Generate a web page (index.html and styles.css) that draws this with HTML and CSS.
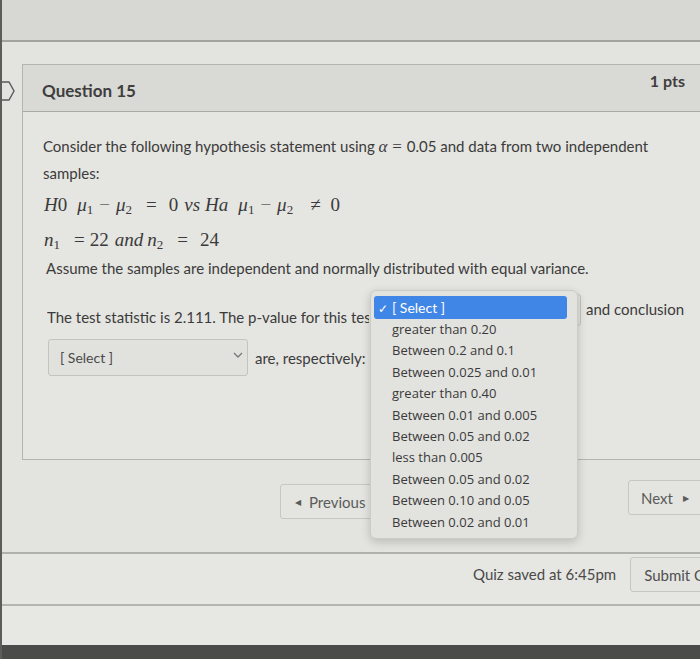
FILE: index.html
```html
<!DOCTYPE html>
<html>
<head>
<meta charset="utf-8">
<link rel="stylesheet" href="styles.css">
</head>
<body>
<div class="screen">
  <div class="topbar"></div>
  <div class="qrow">
    <div class="flagcol">
      <svg class="flag" width="14" height="22" viewBox="0 0 14 22"><path d="M-4 2 H7 L12 11 L7 20 H-4" fill="none" stroke="#5a5a58" stroke-width="1.4"/></svg>
    </div>
    <div class="question">
      <div class="qhead">
        <span class="qtitle">Question 15</span>
        <span class="pts">1 pts</span>
      </div>
      <div class="qbody">
        <p class="intro">Consider the following hypothesis statement using <span class="mi">α</span> <span class="mo">=</span> 0.05 and data from two independent samples:</p>
        <p class="math m1"><span class="t it">H</span><span class="t">0</span><span class="t it g10">μ</span><sub>1</sub><span class="t minus g6">−</span><span class="t it g6">μ</span><sub>2</sub><span class="t g14">=</span><span class="t g12">0</span><span class="t it g6">vs</span><span class="t it g5">Ha</span><span class="t it g10">μ</span><sub>1</sub><span class="t minus g6">−</span><span class="t it g6">μ</span><sub>2</sub><span class="t g16">≠</span><span class="t g10">0</span></p>
        <p class="math m2"><span class="t it">n</span><sub>1</sub><span class="t g14">=</span><span class="t g5">22</span><span class="t it g6">and</span><span class="t it g4">n</span><sub>2</sub><span class="t g14">=</span><span class="t g12">24</span></p>
        <p class="assume">Assume the samples are independent and normally distributed with equal variance.</p>
        <div class="qline ql1">
          <span class="lead">The test statistic is 2.111. The p-value for this test</span>
          <span class="sel sel2"><span class="caret">&#8250;</span></span>
          <span class="after">and conclusion</span>
        </div>
        <div class="qline ql2">
          <span class="sel sel1"><span class="seltext">[ Select ]</span><svg class="chev" width="10" height="6" viewBox="0 0 10 6"><path d="M1 1 L5 5 L9 1" fill="none" stroke="#777" stroke-width="1.3"/></svg></span>
          <span class="after2">are, respectively:</span>
        </div>
      </div>
    </div>
  </div>
  <div class="nav">
    <span class="btn prev"><span class="tri">&#9664;</span>Previous</span>
    <span class="btn next">Next<span class="tri">&#9654;</span></span>
  </div>
  <div class="footer">
    <span class="saved">Quiz saved at 6:45pm</span>
    <span class="btn submit">Submit Quiz</span>
  </div>
  <div class="bottomspace"></div>
  <div class="darkbar"></div>

  <div class="dropdown">
    <div class="opt chosen"><span class="check">✓</span>[ Select ]</div>
    <div class="opt">greater than 0.20</div>
    <div class="opt">Between 0.2 and 0.1</div>
    <div class="opt">Between 0.025 and 0.01</div>
    <div class="opt">greater than 0.40</div>
    <div class="opt">Between 0.01 and 0.005</div>
    <div class="opt">Between 0.05 and 0.02</div>
    <div class="opt">less than 0.005</div>
    <div class="opt">Between 0.05 and 0.02</div>
    <div class="opt">Between 0.10 and 0.05</div>
    <div class="opt">Between 0.02 and 0.01</div>
  </div>
</div>
</body>
</html>
```

FILE: styles.css
```css
html, body {
  margin: 0;
  padding: 0;
}
body {
  width: 700px;
  height: 659px;
  overflow: hidden;
  background: #e3e3df;
  font-family: Lato, "Open Sans", "Liberation Sans", sans-serif;
  color: #3b3b3b;
}
.screen {
  position: relative;
  width: 700px;
  height: 659px;
  border-left: 2px solid #5c5c5a;
  box-sizing: border-box;
  overflow: hidden;
}
.topbar {
  height: 40px;
  background: #d7d7d3;
  border-bottom: 2px solid #a3a39f;
}
.qrow {
  display: flex;
  margin-top: 22px;
}
.flagcol {
  width: 20px;
  flex: none;
  padding-top: 16px;
}
.flag {
  display: block;
}
.question {
  width: 700px;
  flex: none;
  border: 1px solid #b4b4b0;
  border-right: none;
  background: #e5e5e1;
}
.qhead {
  height: 47px;
  background: #d9d9d5;
  border-bottom: 1px solid #a9a9a5;
  display: flex;
  justify-content: space-between;
  align-items: flex-start;
  box-sizing: border-box;
  padding: 0 0 0 19px;
}
.qtitle {
  font-weight: 700;
  font-size: 17px;
  color: #3e3e3e;
  margin-top: 15px;
}
.pts {
  font-weight: 700;
  font-size: 16px;
  color: #3e3e3e;
  margin-top: 6px;
  margin-right: 38px;
}
.qbody {
  height: 347px;
  box-sizing: border-box;
  padding: 21px 0 0 20px;
  font-size: 15px;
  line-height: 26px;
}
.qbody p {
  margin: 0;
}
.intro {
  width: 620px;
}
.mi {
  font-family: "Liberation Serif", serif;
  font-style: italic;
  font-size: 17px;
  margin-right: 1px;
}
.mo {
  font-family: "Liberation Serif", serif;
  font-size: 17px;
  margin-right: 1px;
}
.math {
  font-family: "Liberation Serif", "DejaVu Serif", serif;
  font-size: 19px;
  color: #3a3a3a;
  display: flex;
  align-items: baseline;
  padding-left: 1px;
}
.t {
  display: inline-block;
}
.it {
  font-style: italic;
}
.g4 { margin-left: 4px; }
.g5 { margin-left: 5px; }
.g6 { margin-left: 6px; }
.g10 { margin-left: 10px; }
.g12 { margin-left: 12px; }
.g14 { margin-left: 14px; }
.g16 { margin-left: 17px; }
.math sub {
  font-size: 13px;
  position: relative;
  top: 3px;
  line-height: 0;
}
.minus {
  color: #7a7a78;
}
.m1 { margin-top: 6px !important; }
.m2 { margin-top: 9px !important; }
.assume { margin-top: 2px !important; padding-left: 3px; }
.qline {
  display: flex;
  align-items: center;
}
.ql1 {
  margin-top: 20px;
  padding-left: 4px;
  height: 32px;
}
.lead {
  white-space: nowrap;
  width: 322px;
  overflow: hidden;
  flex: none;
}
.sel {
  flex: none;
  box-sizing: border-box;
  border: 1px solid #c3c3bf;
  border-radius: 3px;
  background: #e1e1dd;
  position: relative;
}
.sel2 {
  width: 210px;
  height: 32px;
  margin-left: 2px;
  margin-top: -14px;
}
.caret {
  position: absolute;
  right: 3px;
  top: 2px;
  font-size: 10px;
  color: #aa6666;
  line-height: 10px;
}
.after {
  margin-left: 5px;
  margin-top: -16px;
}
.ql2 {
  margin-top: 6px;
  padding-left: 5px;
}
.sel1 {
  width: 200px;
  height: 37px;
  display: flex;
  align-items: center;
  justify-content: space-between;
  padding: 0 4px 0 11px;
}
.seltext {
  font-size: 14px;
  color: #4a4a4a;
}
.chev {
  margin-top: -6px;
}
.after2 {
  margin-left: 7px;
}
.nav {
  height: 94px;
  display: flex;
  align-items: flex-start;
  padding-top: 24px;
  box-sizing: border-box;
  padding-left: 278px;
  border-bottom: 2px solid #b0b0ac;
}
.btn {
  box-sizing: border-box;
  height: 35px;
  display: inline-flex;
  align-items: center;
  border: 1px solid #c6c6c2;
  border-radius: 3px;
  background: #e4e4e0;
  color: #5b5b5b;
  font-size: 15px;
  flex: none;
  white-space: nowrap;
}
.prev {
  width: 110px;
  padding-left: 14px;
}
.prev .tri {
  font-size: 8px;
  margin-right: 8px;
}
.next {
  margin-left: 238px;
  margin-top: -4px;
  width: 90px;
  padding-left: 12px;
}
.next .tri {
  font-size: 8px;
  margin-left: 10px;
}
.footer {
  height: 52px;
  display: flex;
  align-items: flex-start;
  padding-top: 3px;
  padding-left: 471px;
  box-sizing: border-box;
  border-bottom: 2px solid #b4b4b0;
  background: #e6e6e2;
  white-space: nowrap;
}
.saved {
  font-size: 15px;
  color: #4a4a4a;
  flex: none;
  line-height: 35px;
}
.submit {
  margin-left: 14px;
  width: 100px;
  padding-left: 13px;
  color: #505050;
}
.bottomspace {
  height: 39px;
  background: #e7e7e3;
}
.darkbar {
  height: 20px;
  background: #4b4b4a;
}
.dropdown {
  position: absolute;
  left: 368px;
  top: 290px;
  width: 208px;
  box-sizing: border-box;
  padding: 5px 10px 5px 3px;
  background: #e2e2df;
  border: 1px solid #cbcbc8;
  border-radius: 6px;
  box-shadow: 0 3px 10px rgba(0,0,0,0.18);
  font-family: "Open Sans", Lato, "Liberation Sans", sans-serif;
  font-size: 13px;
  color: #3a3a3a;
}
.opt {
  height: 21.4px;
  line-height: 21.4px;
  padding-left: 18px;
  white-space: nowrap;
}
.opt.chosen {
  height: 23px;
  line-height: 23px;
  background: #3f86e6;
  color: #fff;
  border-radius: 3px;
  padding-left: 4px;
  font-family: Lato, "Open Sans", sans-serif;
  font-size: 14px;
}
.check {
  display: inline-block;
  width: 14px;
  font-size: 12px;
}
```
